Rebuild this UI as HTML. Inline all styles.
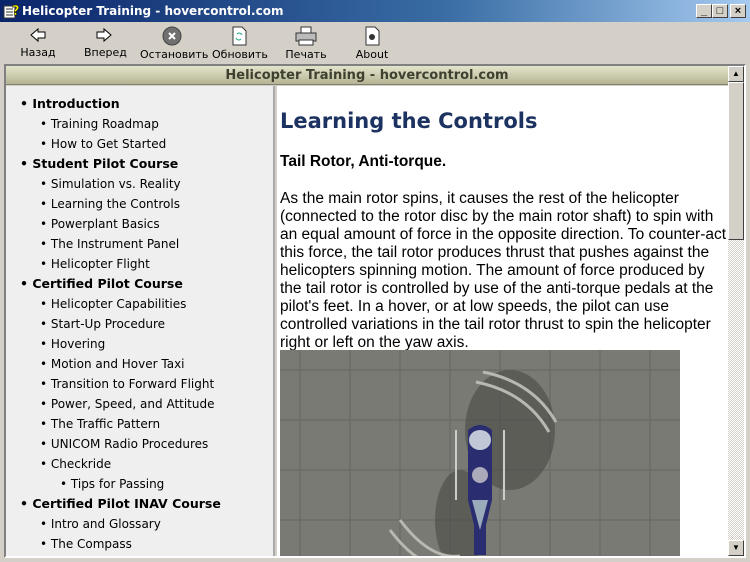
<!DOCTYPE html>
<html><head><meta charset="utf-8"><style>
*{margin:0;padding:0;box-sizing:border-box}
body{width:750px;height:562px;overflow:hidden;background:#d4d0c8;font-family:"Liberation Sans",Arial,sans-serif;position:relative}
.title{position:absolute;left:0;top:0;width:750px;height:22px;background:linear-gradient(90deg,#0a246a,#3a6ea5 60%,#a6caf0);color:#fff;font-weight:bold;line-height:22px;padding-left:22px;font-family:"DejaVu Sans",sans-serif;font-size:12px}
.wb{position:absolute;top:4px;width:16px;height:14px;background:#d4d0c8;border:1px solid;border-color:#fff #404040 #404040 #fff;font-size:11px;line-height:12px;text-align:center;color:#000;font-weight:bold}
.tb{position:absolute;top:26px;text-align:center;font-size:11px;font-family:"DejaVu Sans",sans-serif;color:#000}
.tb svg{display:block;margin:0 auto 2px}
.frame{position:absolute;left:4px;top:64px;width:742px;height:494px;border:2px solid;border-color:#808080 #fff #fff #808080}
.hdr{position:absolute;left:6px;top:66px;width:722px;height:19px;background:linear-gradient(#e4e4cc,#b4b494);font-family:"DejaVu Sans",sans-serif;font-weight:bold;font-size:13px;color:#404030;text-align:center;line-height:19px;border-bottom:1px solid #808070}
.left{position:absolute;left:6px;top:86px;width:269px;height:470px;background:#efefef;border-right:2px solid #aaa;overflow:hidden}
.it{position:absolute;font-family:"DejaVu Sans",sans-serif;font-size:12px;white-space:nowrap;color:#000}
.b{font-weight:bold;font-size:12.5px}
.right{position:absolute;left:277px;top:86px;width:451px;height:470px;background:#fff;overflow:hidden}
h1{position:absolute;left:3px;top:23px;font-family:"DejaVu Sans",sans-serif;font-weight:bold;font-size:21px;color:#1c3260;white-space:nowrap}
h2{position:absolute;left:3px;top:67px;font-size:15.5px;font-weight:bold}
p{position:absolute;left:3px;top:104px;width:449px;font-size:15.5px;line-height:18px;color:#000}
.sb{position:absolute;left:728px;top:66px;width:16px;height:490px;background:repeating-conic-gradient(#d4d0c8 0 25%,#fff 0 50%) 0 0/2px 2px}
.sbb{position:absolute;left:0;width:16px;height:16px;background:#d4d0c8;border:1px solid;border-color:#fff #404040 #404040 #fff}
</style></head><body>
<div class="title"><svg style="position:absolute;left:3px;top:3px" width="16" height="16"><rect x="1" y="3" width="11" height="12" fill="#fff" stroke="#333"/><path d="M3 6h7M3 9h7M3 12h7" stroke="#333"/><text x="9" y="12" font-size="13" font-weight="bold" fill="#ff0" stroke="#000" stroke-width=".5">?</text></svg>Helicopter Training - hovercontrol.com</div>
<div class="wb" style="left:696px">_</div><div class="wb" style="left:712px">□</div><div class="wb" style="left:730px">×</div>
<div class="tb" style="left:20px;width:36px"><svg width="20" height="18"><path d="M3 9l7-6v3h7v6h-7v3z" fill="#fff" stroke="#000"/></svg>Назад</div>
<div class="tb" style="left:84px;width:40px"><svg width="20" height="18"><path d="M17 9l-7-6v3H3v6h7v3z" fill="#fff" stroke="#000"/></svg>Вперед</div>
<div class="tb" style="left:140px;width:64px"><svg width="20" height="20"><circle cx="10" cy="10" r="9" fill="#707070" stroke="#444"/><path d="M7 7l6 6M13 7l-6 6" stroke="#fff" stroke-width="2"/></svg>Остановить</div>
<div class="tb" style="left:212px;width:54px"><svg width="20" height="20"><path d="M4 1h9l4 4v14H4z" fill="#fff" stroke="#333"/><path d="M8 8a3 3 0 0 1 5 1M12 13a3 3 0 0 1-5-1" stroke="#2a8" fill="none"/></svg>Обновить</div>
<div class="tb" style="left:284px;width:44px"><svg width="22" height="20"><rect x="6" y="1" width="10" height="6" fill="#fff" stroke="#333"/><rect x="1" y="7" width="20" height="8" fill="#bbb" stroke="#333"/><rect x="4" y="14" width="14" height="5" fill="#fff" stroke="#333"/></svg>Печать</div>
<div class="tb" style="left:354px;width:36px"><svg width="20" height="20"><path d="M4 1h9l4 4v14H4z" fill="#fff" stroke="#333"/><circle cx="10" cy="11" r="3" fill="#333"/></svg>About</div>
<div class="frame"></div>
<div class="hdr">Helicopter Training - hovercontrol.com</div>
<div class="left">
<div class="it b" style="left:14px;top:10px">• Introduction</div>
<div class="it" style="left:34px;top:31px">• Training Roadmap</div>
<div class="it" style="left:34px;top:51px">• How to Get Started</div>
<div class="it b" style="left:14px;top:70px">• Student Pilot Course</div>
<div class="it" style="left:34px;top:91px">• Simulation vs. Reality</div>
<div class="it" style="left:34px;top:111px">• Learning the Controls</div>
<div class="it" style="left:34px;top:131px">• Powerplant Basics</div>
<div class="it" style="left:34px;top:151px">• The Instrument Panel</div>
<div class="it" style="left:34px;top:171px">• Helicopter Flight</div>
<div class="it b" style="left:14px;top:190px">• Certified Pilot Course</div>
<div class="it" style="left:34px;top:211px">• Helicopter Capabilities</div>
<div class="it" style="left:34px;top:231px">• Start-Up Procedure</div>
<div class="it" style="left:34px;top:251px">• Hovering</div>
<div class="it" style="left:34px;top:271px">• Motion and Hover Taxi</div>
<div class="it" style="left:34px;top:291px">• Transition to Forward Flight</div>
<div class="it" style="left:34px;top:311px">• Power, Speed, and Attitude</div>
<div class="it" style="left:34px;top:331px">• The Traffic Pattern</div>
<div class="it" style="left:34px;top:351px">• UNICOM Radio Procedures</div>
<div class="it" style="left:34px;top:371px">• Checkride</div>
<div class="it" style="left:54px;top:391px">• Tips for Passing</div>
<div class="it b" style="left:14px;top:410px">• Certified Pilot INAV Course</div>
<div class="it" style="left:34px;top:431px">• Intro and Glossary</div>
<div class="it" style="left:34px;top:451px">• The Compass</div>
</div>
<div class="right">
<h1>Learning the Controls</h1>
<h2>Tail Rotor, Anti-torque.</h2>
<p>As the main rotor spins, it causes the rest of the helicopter (connected to the rotor disc by the main rotor shaft) to spin with an equal amount of force in the opposite direction. To counter-act this force, the tail rotor produces thrust that pushes against the helicopters spinning motion. The amount of force produced by the tail rotor is controlled by use of the anti-torque pedals at the pilot's feet. In a hover, or at low speeds, the pilot can use controlled variations in the tail rotor thrust to spin the helicopter right or left on the yaw axis.</p>
<svg style="position:absolute;left:3px;top:264px" width="400" height="206">
<rect width="400" height="206" fill="#7a7a74"/>
<g stroke="#6c6c66" stroke-width="1.5"><path d="M20 0v206M70 0v206M120 0v206M170 0v206M220 0v206M270 0v206M320 0v206M370 0v206M0 20h400M0 70h400M0 120h400M0 170h400"/></g>
<ellipse cx="230" cy="80" rx="45" ry="60" fill="#4a4a46" opacity=".6"/>
<ellipse cx="180" cy="170" rx="25" ry="50" fill="#4a4a46" opacity=".6"/>
<path d="M196 32q50 10 73 50M203 22q50 10 73 50M120 170q30 40 60 36M110 180q30 40 60 36" stroke="#b8b8b0" stroke-width="3" fill="none"/>
<path d="M188 80q12-10 24 0v70l-6 25v30h-12v-30l-6-25z" fill="#2a2e70"/>
<ellipse cx="200" cy="90" rx="11" ry="10" fill="#c0c8d8"/>
<path d="M176 80v70M224 80v70" stroke="#ccc" stroke-width="2"/>
<ellipse cx="200" cy="125" rx="8" ry="8" fill="#aab"/>
<path d="M192 150l8 30 8-30z" fill="#9ab"/>
</svg>
</div>
<div class="sb"><div class="sbb" style="top:0;font-size:8px;text-align:center;line-height:14px">▲</div><div class="sbb" style="top:16px;height:158px"></div><div class="sbb" style="top:474px;font-size:8px;text-align:center;line-height:14px">▼</div></div>
</body></html>
